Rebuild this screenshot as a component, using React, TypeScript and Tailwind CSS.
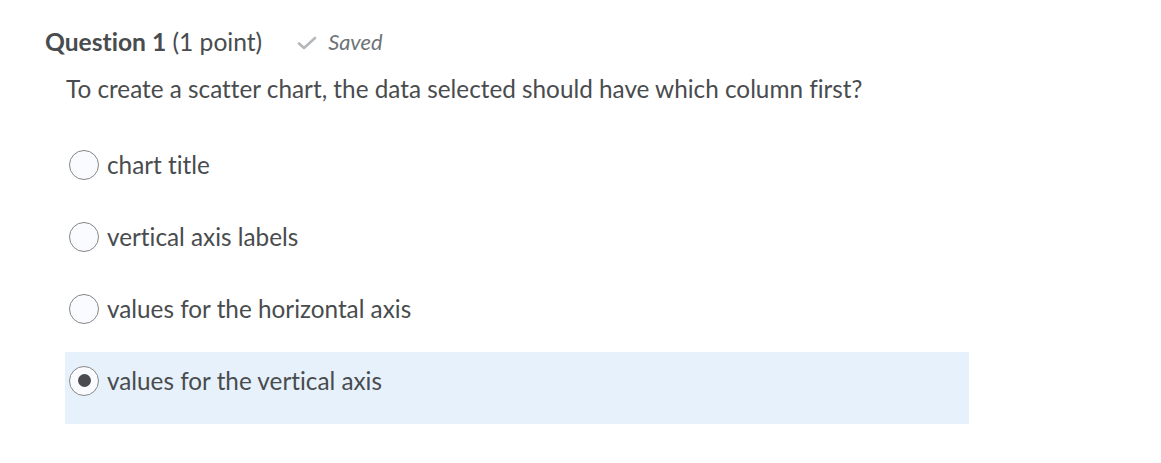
import React from "react";

const options = [
  "chart title",
  "vertical axis labels",
  "values for the horizontal axis",
  "values for the vertical axis",
];

function Radio({ checked }: { checked: boolean }) {
  return (
    <span className="flex h-[30px] w-[30px] shrink-0 items-center justify-center rounded-full border border-[#868686] bg-[#f9fbff]">
      {checked && <span className="h-[13px] w-[13px] rounded-full bg-[#494c4e]" />}
    </span>
  );
}

export default function App() {
  const selected = 3;
  return (
    <div
      className="min-h-[463px] w-[1161px] bg-white text-[#494c4e]"
      style={{ fontFamily: "Lato, 'Noto Sans', sans-serif", fontVariantLigatures: "none" }}
    >
      <div className="pl-[45px] pt-[26px]">
        <div className="flex items-center">
          <h2 className="text-[24.6px] leading-[30px]">
            <span className="font-bold">Question 1</span> <span>(1 point)</span>
          </h2>
          <div className="ml-[35px] flex items-center gap-[11px] text-[#6e7376]">
            <svg width="20" height="14" viewBox="0 0 20 14" className="mt-[1px]">
              <path d="M2 7.5 L7 12 L18 2" fill="none" stroke="#b4b8bb" strokeWidth="2.6" strokeLinecap="round" strokeLinejoin="round" />
            </svg>
            <span className="text-[21.8px] italic">Saved</span>
          </div>
        </div>
        <p className="mt-[15px] pl-[21px] text-[24.3px] leading-[30px]">
          To create a scatter chart, the data selected should have which column first?
        </p>
      </div>
      <div className="mt-[32px] pl-[65px]">
        {options.map((o, i) => (
          <div
            key={o}
            className={`flex h-[72px] w-[904px] items-start gap-[8px] pl-[4px] pt-[14px] ${i === selected ? "bg-[#e7f1fb]" : ""}`}
          >
            <Radio checked={i === selected} />
            <span className="text-[24.3px] leading-[30px]">{o}</span>
          </div>
        ))}
      </div>
    </div>
  );
}
